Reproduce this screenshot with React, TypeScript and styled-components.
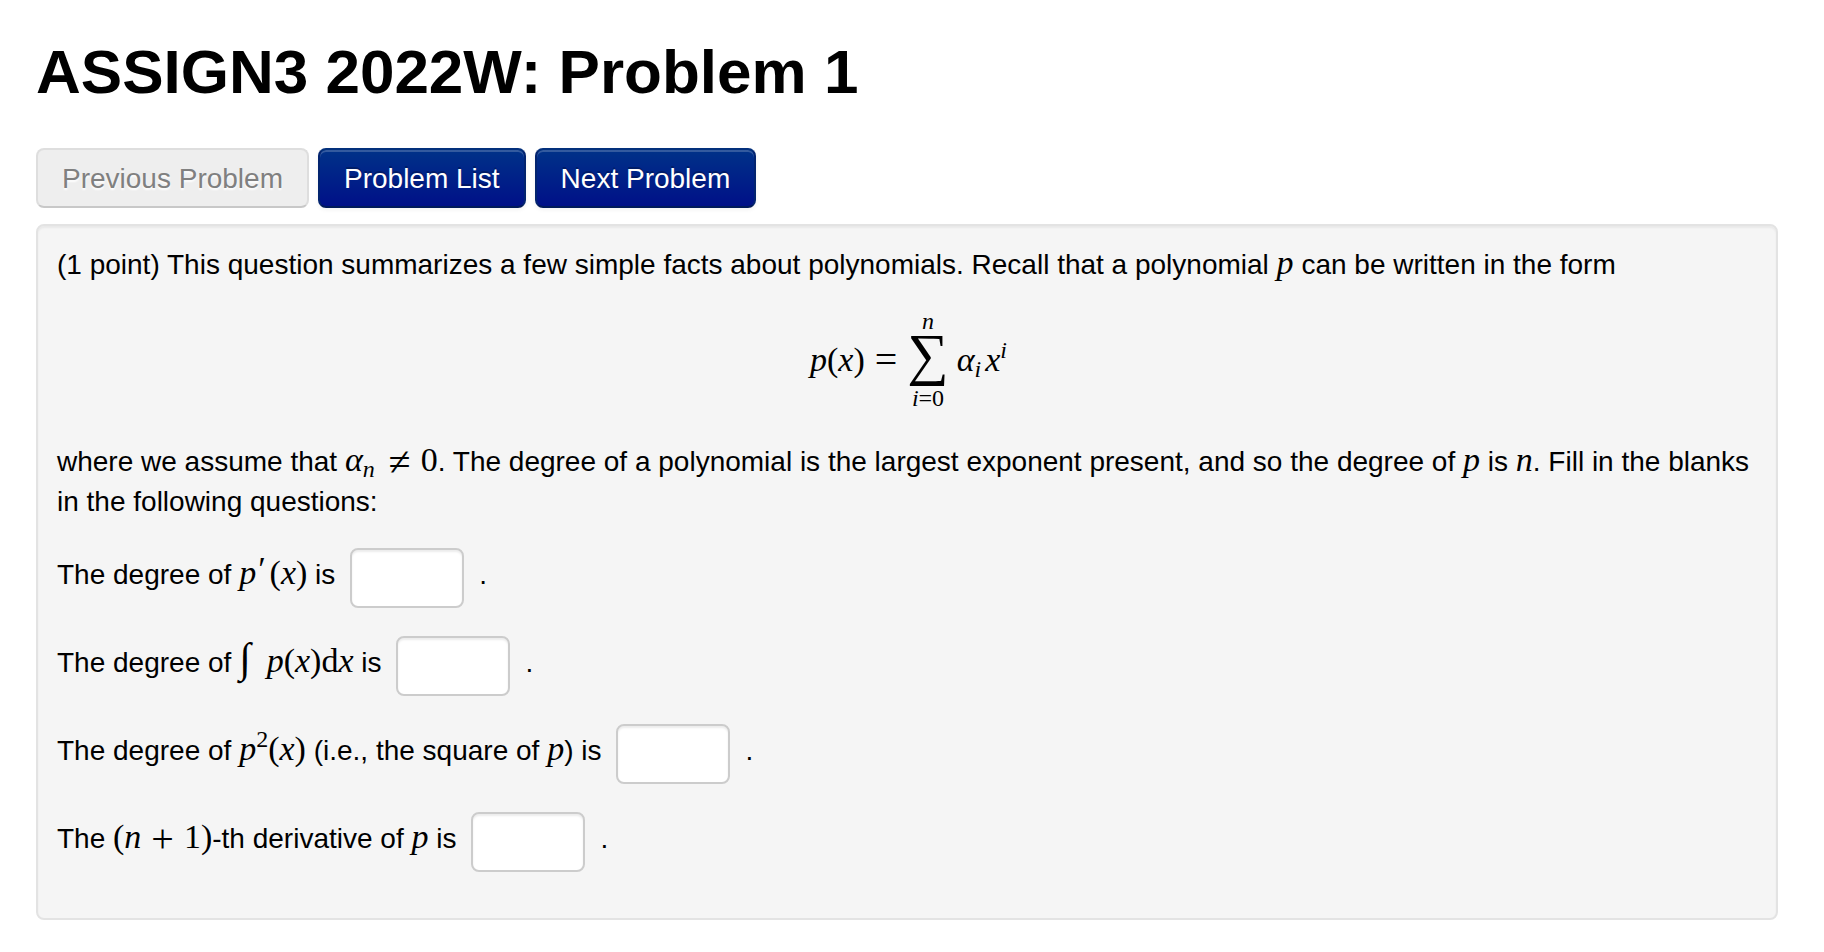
import React, { useId } from "react";
import styled, { createGlobalStyle, css } from "styled-components";

const GlobalStyle = createGlobalStyle`
  *, *::before, *::after { box-sizing: border-box; }
  body {
    margin: 0;
    background: #fff;
    color: #000;
    font-family: "Liberation Sans", Arial, sans-serif;
    font-size: 28px;
    line-height: 40px;
  }
`;

const Page = styled.main`
  padding: 32px 46px 32px 36px;
`;

const Title = styled.h1`
  margin: 0 0 36px;
  font-size: 62px;
  line-height: 80px;
  font-weight: 700;
`;

const Nav = styled.nav`
  display: flex;
  flex-wrap: wrap;
  gap: 9px;
  margin-bottom: 16px;
`;

const NavButton = styled.button`
  height: 60px;
  padding: 2px 24px 0;
  border: 2px solid;
  border-color: #03307c #03246f #001a5a;
  border-radius: 8px;
  background: linear-gradient(to bottom, #003388, #000f88) border-box;
  box-shadow: inset 0 2px 0 rgba(255, 255, 255, 0.2), 0 2px 4px rgba(0, 0, 0, 0.05);
  color: #fff;
  font: inherit;
  text-shadow: 0 -2px 0 rgba(0, 0, 0, 0.25);
  cursor: pointer;

  &:disabled {
    border-color: #dedede #dedede #c8c8c8;
    background: #eee;
    box-shadow: none;
    color: #808080;
    text-shadow: 0 2px 2px #fff;
    cursor: default;
  }
`;

const Well = styled.section`
  padding: 19px 16px 46px 19px;
  border: 2px solid #e3e3e3;
  border-radius: 8px;
  background: #f5f5f5;
  box-shadow: inset 0 2px 2px rgba(0, 0, 0, 0.05);
`;

const Paragraph = styled.p`
  margin: 0;
`;

const Formula = styled.span`
  font-family: "Liberation Serif", "Times New Roman", serif;
  font-size: 34px;
  line-height: 1px;
  white-space: nowrap;
`;

const script = css`
  font-size: 24px;
  line-height: 1px;
`;

const Sub = styled.sub`
  ${script}
  margin-right: 4px;
  vertical-align: -6px;
`;

const Sup = styled.sup`
  ${script}
  vertical-align: 13px;
`;

const Prime = styled.sup`
  margin-right: 6px;
  font-size: 34px;
  font-style: italic;
  line-height: 1px;
  vertical-align: 4px;
`;

const Operator = styled.span`
  margin: 0 10px;
  font-size: 40px;
  vertical-align: -4px;
`;

const Integral = styled.span`
  margin-right: 16px;
  font-size: 42px;
  font-style: italic;
`;

const Display = styled.div`
  display: flex;
  justify-content: center;
  align-items: center;
  margin: 24px 0 32px;
  font-family: "Liberation Serif", "Times New Roman", serif;
  font-size: 34px;
  line-height: 40px;
`;

const Sum = styled.span`
  display: flex;
  flex-direction: column;
  align-items: center;
  margin-right: 8px;
`;

const Limit = styled.span`
  font-size: 24px;
  line-height: 24px;
`;

const SumSign = styled.span`
  padding-bottom: 10px;
  font-size: 58px;
  line-height: 43px;
`;

const Questions = styled.div`
  display: flex;
  flex-direction: column;
  gap: 28px;
  margin-top: 26px;
`;

const Question = styled.div`
  display: flex;
  align-items: flex-start;
  gap: 15px;
  line-height: 54px;
`;

const Answer = styled.input`
  width: 114px;
  height: 60px;
  padding: 8px 12px;
  border: 2px solid #ccc;
  border-radius: 8px;
  background: #fff;
  box-shadow: inset 0 2px 2px rgba(0, 0, 0, 0.075);
  color: #555;
  font: inherit;
`;

function Blank({ children }: { children: React.ReactNode }) {
  const id = useId();
  return (
    <Question>
      <label htmlFor={id}>{children}</label>
      <Answer id={id} type="text" />
      <span>.</span>
    </Question>
  );
}

const P = () => <Formula><i>p</i></Formula>;

export default function App() {
  return (
    <>
      <GlobalStyle />
      <Page>
        <Title>ASSIGN3 2022W: Problem 1</Title>
        <Nav>
          <NavButton type="button" disabled>Previous Problem</NavButton>
          <NavButton type="button">Problem List</NavButton>
          <NavButton type="button">Next Problem</NavButton>
        </Nav>
        <Well>
          <Paragraph>
            (1 point) This question summarizes a few simple facts about polynomials. Recall that a
            polynomial <P /> can be written in the form
          </Paragraph>
          <Display>
            <span><i>p</i>(<i>x</i>)</span>
            <Operator>=</Operator>
            <Sum>
              <Limit><i>n</i></Limit>
              <SumSign>∑</SumSign>
              <Limit><i>i</i>=0</Limit>
            </Sum>
            <Formula><i>α</i><Sub><i>i</i></Sub><i>x</i><Sup><i>i</i></Sup></Formula>
          </Display>
          <Paragraph>
            where we assume that <Formula><i>α</i><Sub><i>n</i></Sub><Operator>≠</Operator>0</Formula>.
            The degree of a polynomial is the largest exponent present, and so the degree
            of <P /> is <Formula><i>n</i></Formula>. Fill in the blanks{" "}
            <span>in the following questions:</span>
          </Paragraph>
          <Questions>
            <Blank>The degree of <Formula><i>p</i><Prime>′</Prime>(<i>x</i>)</Formula> is</Blank>
            <Blank>
              The degree of <Formula><Integral>∫</Integral><i>p</i>(<i>x</i>)d<i>x</i></Formula> is
            </Blank>
            <Blank>
              The degree of <Formula><i>p</i><Sup>2</Sup>(<i>x</i>)</Formula> (i.e., the square
              of <P />) is
            </Blank>
            <Blank>
              The <Formula>(<i>n</i><Operator>+</Operator>1)</Formula>-th derivative of <P /> is
            </Blank>
          </Questions>
        </Well>
      </Page>
    </>
  );
}
